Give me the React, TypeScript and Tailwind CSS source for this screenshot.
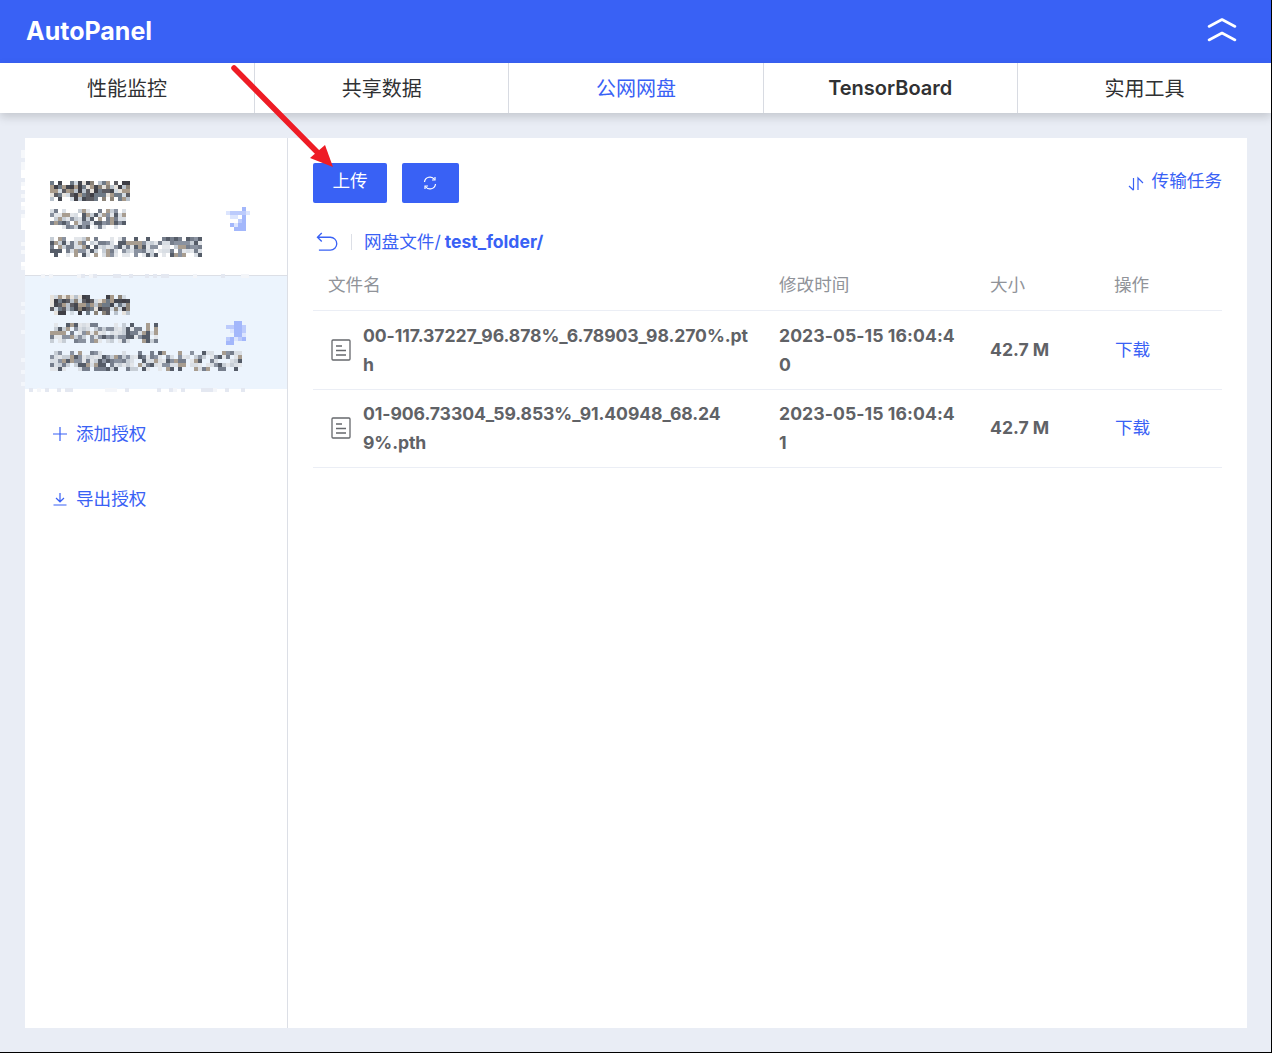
import React from 'react';

const FONT = "font-['Inter','Noto_Sans_CJK_SC',sans-serif]";

const TABS = [
  { label: '性能监控' },
  { label: '共享数据' },
  { label: '公网网盘', active: true },
  { label: 'TensorBoard', bold: true },
  { label: '实用工具' },
];

const FILES = [
  { name: ['00-117.37227_96.878%_6.78903_98.270%.pt', 'h'], time: ['2023-05-15 16:04:4', '0'], size: '42.7 M' },
  { name: ['01-906.73304_59.853%_91.40948_68.24', '9%.pth'], time: ['2023-05-15 16:04:4', '1'], size: '42.7 M' },
];

// pixelated (redacted) block, drawn as a small svg mosaic
function Mosaic({ w, h, seed, palette }: { w: number; h: number; seed: number; palette: string[] }) {
  const cells: React.ReactNode[] = [];
  let s = seed;
  const rand = () => {
    s = (s * 9301 + 49297) % 233280;
    return s / 233280;
  };
  for (let y = 0; y < h; y += 4) {
    const edge = y === 0 || y + 4 >= h;
    for (let x = 0; x < w; x += 4) {
      const c = palette[Math.floor(rand() * palette.length)];
      if (edge && rand() < 0.35) continue;
      if (c !== 'none') cells.push(<rect key={`${x}-${y}`} x={x} y={y} width={4} height={4} fill={c} />);
    }
  }
  return (
    <svg width={w} height={h} viewBox={`0 0 ${w} ${h}`} shapeRendering="crispEdges" className="block">
      {cells}
    </svg>
  );
}

// the two redacted star icons, 6x6 cells of 4px: a = strong, b = mid, c = pale
const STAR_COLORS: Record<string, string> = { a: '#a3b7fb', b: '#bccbfc', c: '#dce5fe' };
const STAR_1 = ['....a.', 'cbbbbc', '.cc.a.', '...ba.', '.acaa.', '..aaa.'];
const STAR_2 = ['..aa..', 'bbaab.', '.caab.', '..aac.', 'bacba.', 'aa....'];

function Star({ rows }: { rows: string[] }) {
  return (
    <svg width="24" height="24" viewBox="0 0 24 24" shapeRendering="crispEdges" className="block">
      {rows.flatMap((row, y) =>
        row.split('').map((c, x) => (c === '.' ? null : <rect key={`${x}-${y}`} x={x * 4} y={y * 4} width={4} height={4} fill={STAR_COLORS[c]} />)),
      )}
    </svg>
  );
}

const DARK = ['#5c5c62', '#8b8378', '#44474f', '#b9c2cc', '#e6e2dc', '#6f7a86', '#a89a8a', '#3f3f46', '#d3dbe3'];
const LIGHT = ['#8a92a0', '#c7ced6', '#555c68', '#e3e6ea', '#a89d90', 'none', '#767e8c', '#d9dee4'];
const EDGE = ['#e4e8f1', '#f3f5f9', 'none', 'none'];

function SideItem({ active, lines, seed, star }: { active?: boolean; lines: [number, number, number]; seed: number; star: string[] }) {
  return (
    <div className={active ? 'relative flex h-[113px] items-center bg-[#ecf4fd] pl-[25px]' : 'relative flex h-[138px] items-center border-b border-[#dcdfe6] pt-[24px] pl-[25px]'}>
      <div className="flex flex-col gap-[8px]">
        <Mosaic w={lines[0]} h={20} seed={seed} palette={DARK} />
        <Mosaic w={lines[1]} h={20} seed={seed + 7} palette={LIGHT} />
        <Mosaic w={lines[2]} h={20} seed={seed + 13} palette={LIGHT} />
      </div>
      <div className={active ? 'absolute top-[45px] left-[201px]' : 'absolute top-[69px] left-[201px]'}>
        <Star rows={star} />
      </div>
    </div>
  );
}

function FileIcon() {
  return (
    <svg width="20" height="24" viewBox="0 0 20 24" fill="none" stroke="#66686c" strokeWidth="1.3" className="shrink-0">
      <rect x="1" y="2" width="18" height="20" rx="1" />
      <path d="M5 8h6M5 12.500h10M5 17h10" />
    </svg>
  );
}

export default function App() {
  return (
    <div className={`${FONT} relative flex h-[1053px] w-[1272px] flex-col border-r border-b border-black bg-[#e9edf5]`}>
      <header className="flex h-[63px] shrink-0 items-center justify-between bg-[#3961f5] pr-[34px] pl-[26px]">
        <span className="text-[25px] font-bold text-white">AutoPanel</span>
        <svg width="30" height="26" viewBox="0 0 30 26" fill="none" stroke="#fff" strokeWidth="2.600" strokeLinecap="round" strokeLinejoin="round" className="mb-[4px]">
          <path d="M2 9.500 15 2.500 28 9.500M2 23 15 16 28 23" />
        </svg>
      </header>

      <nav className="z-10 grid h-[50px] shrink-0 grid-cols-5 bg-white shadow-[0_4px_9px_rgba(0,0,0,0.16)]">
        {TABS.map((t, i) => (
          <div
            key={t.label}
            className={`flex items-center justify-center text-[20px] ${i > 0 ? 'border-l border-[#d8dbe2]' : ''} ${t.active ? 'text-[#3961f5]' : 'text-[#303133]'} ${t.bold ? 'font-semibold' : 'pt-[1px]'}`}
          >
            {t.label}
          </div>
        ))}
      </nav>

      <main className="flex min-h-0 flex-1 px-[25px] pt-[25px] pb-[24px]">
        <div className="flex flex-1 bg-white">
          <aside className="w-[263px] shrink-0 border-r border-[#dcdfe6]">
            <SideItem lines={[80, 76, 152]} seed={11} star={STAR_1} />
            <SideItem active lines={[80, 108, 192]} seed={57} star={STAR_2} />
            <div className="mt-[33px] flex items-center pl-[28px] text-[17.600px] leading-[24px] text-[#3961f5]">
              <svg width="14" height="14" viewBox="0 0 14 14" stroke="currentColor" strokeWidth="1.200" className="mr-[9px]">
                <path d="M7 0v14M0 7h14" />
              </svg>
              添加授权
            </div>
            <div className="mt-[41px] flex items-center pl-[28px] text-[17.600px] leading-[24px] text-[#3961f5]">
              <svg width="14" height="14" viewBox="0 0 14 14" fill="none" stroke="currentColor" strokeWidth="1.200" className="mr-[9px]">
                <path d="M7 1v8.500M3 6l4 3.800L11 6M0.500 13h13" />
              </svg>
              导出授权
            </div>
          </aside>

          <section className="flex-1 pt-[25px] pr-[25px] pl-[25px]">
            <div className="flex items-center justify-between">
              <div className="flex gap-[15px]">
                <button className="flex h-[40px] w-[74px] items-center justify-center rounded-[2px] bg-[#3961f5] pb-[3px] text-[17.600px] text-white">上传</button>
                <button className="flex h-[40px] w-[57px] items-center justify-center rounded-[2px] bg-[#3961f5] pr-[1px] text-white">
                  <svg width="14" height="14" viewBox="0 0 14 14" fill="none" stroke="currentColor" strokeWidth="1.200">
                    <path d="M1.500 6A5.500 5.500 0 0 1 11.500 3.500M12.500 8A5.500 5.500 0 0 1 2.500 10.500" />
                    <path d="M12 1v3H9M2 13v-3h3" />
                  </svg>
                </button>
              </div>
              <div className="flex items-center text-[17.600px] text-[#3961f5]">
                <svg width="16" height="16" viewBox="0 0 16 16" fill="none" stroke="currentColor" strokeWidth="1.200" className="mt-[2px] mr-[8px]">
                  <path d="M5.500 2v12M1 10l4.500 4.200M10 14V2l5 5" />
                </svg>
                <span className="pb-[3px]">传输任务</span>
              </div>
            </div>

            <div className="mt-[26px] flex h-[26px] items-center text-[17.600px] text-[#3961f5]">
              <svg width="22" height="20" viewBox="0 0 23 21" fill="none" stroke="currentColor" strokeWidth="1.400" className="ml-[3px]">
                <path d="M6 1 1.500 5.500 6 10M1.500 5.500H15a6.500 6.500 0 0 1 0 13.500H3" />
              </svg>
              <span className="mx-[12.500px] h-[16px] w-px bg-[#dcdfe6]" />
              <span>网盘文件/</span>
              <span className="ml-[4px] font-bold">test_folder/</span>
            </div>

            <div className="mt-[9px] grid h-[47px] grid-cols-[451px_211px_124px_123px] items-center border-b border-[#ebeef5] pb-[4px] text-[17.600px] text-[#909399]">
              <div className="pl-[15px]">文件名</div>
              <div className="pl-[15px]">修改时间</div>
              <div className="pl-[15px]">大小</div>
              <div className="pl-[15px]">操作</div>
            </div>

            {FILES.map((f) => (
              <div key={f.name[0]} className="grid h-[78.500px] grid-cols-[451px_211px_124px_123px] items-center border-b border-[#ebeef5] text-[17.600px] leading-[29px] font-bold text-[#606266]">
                <div className="flex items-center pl-[18px]">
                  <FileIcon />
                  <div className="ml-[12px] tracking-[-0.08px] whitespace-nowrap">
                    {f.name.map((l) => <div key={l}>{l}</div>)}
                  </div>
                </div>
                <div className="px-[15px] tracking-[0.08px] whitespace-nowrap">
                  {f.time.map((l) => <div key={l}>{l}</div>)}
                </div>
                <div className="px-[15px] pb-[1px]">{f.size}</div>
                <div className="pr-[15px] pb-[1px] pl-[16px] font-normal text-[#3961f5]">下载</div>
              </div>
            ))}
          </section>
        </div>
      </main>

      {/* mosaic spill from the redaction over the card edges */}
      <div className="absolute top-[150px] left-[21px] z-10"><Mosaic w={4} h={124} seed={5} palette={['#ffffff', '#f6f8fb', 'none']} /></div>
      <div className="absolute top-[282px] left-[21px] z-10"><Mosaic w={4} h={104} seed={9} palette={['#f3f6fb', 'none', 'none']} /></div>
      <div className="absolute top-[274px] left-[25px] z-10"><Mosaic w={228} h={4} seed={3} palette={EDGE} /></div>
      <div className="absolute top-[388px] left-[25px] z-10"><Mosaic w={228} h={4} seed={17} palette={EDGE} /></div>

      <svg width="110" height="110" viewBox="0 0 110 110" className="absolute top-[62px] left-[228px] z-20">
        <path d="M6 6 94 95" stroke="#ee1c25" strokeWidth="5.500" strokeLinecap="round" fill="none" />
        <path d="M105 105 82 96 97 83Z" fill="#ee1c25" />
      </svg>
    </div>
  );
}
